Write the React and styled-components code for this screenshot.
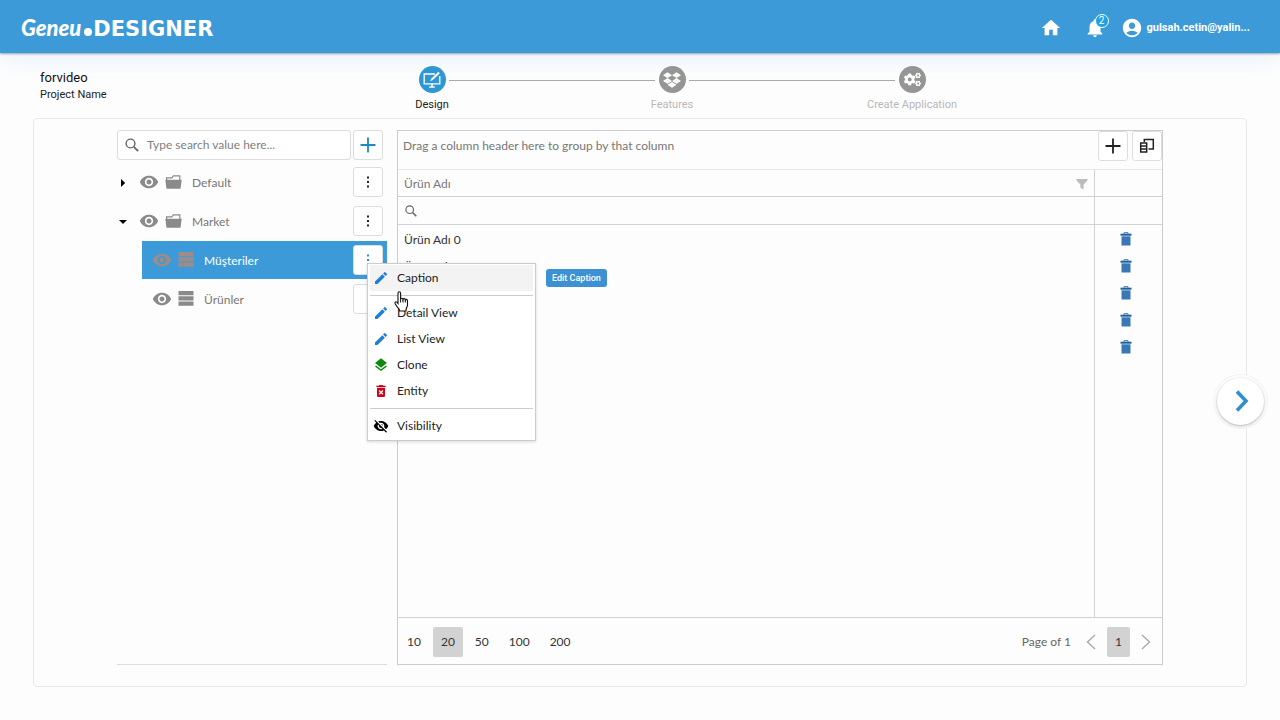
import React from "react";
import styled, { createGlobalStyle, css } from "styled-components";
import {
  MdHome,
  MdNotifications,
  MdAccountCircle,
  MdVisibility,
  MdVisibilityOff,
  MdEdit,
  MdLayers,
  MdDeleteForever,
} from "react-icons/md";
import { FaDropbox, FaCogs } from "react-icons/fa";

const Global = createGlobalStyle`
  *, *::before, *::after { box-sizing: border-box; }
  body {
    margin: 0;
    background: #fdfdfd;
    color: #333;
    font: 12px/16px Lato, "Open Sans", sans-serif;
  }
  button, input { font: inherit; color: inherit; }
  button { cursor: pointer; padding: 0; border: 0; background: none; }
  a { color: inherit; text-decoration: none; }
  svg { display: block; flex: none; }
`;

const Page = styled.div`
  min-height: 100vh;
  display: flex;
  flex-direction: column;
`;

/* ---------- top bar ---------- */

const TopBar = styled.header`
  display: flex;
  align-items: center;
  justify-content: space-between;
  height: 53px;
  padding: 3px 30px 0 21px;
  background: #3d9ad8;
  color: #fff;
  box-shadow: 0 1px 2px rgba(0, 0, 0, 0.35), 0 4px 24px rgba(190, 220, 250, 0.4);
`;

const Brand = styled.a`
  display: flex;
  align-items: baseline;
  line-height: 26px;
`;

const BrandScript = styled.span`
  font: italic 900 22px/26px Lato, sans-serif;
`;

const BrandDot = styled.span`
  width: 8px;
  height: 8px;
  margin: 0 1px 0 3px;
  border-radius: 50%;
  background: #fff;
`;

const BrandTech = styled.span`
  font: 700 21px/26px "DejaVu Sans", sans-serif;
`;

const TopActions = styled.nav`
  display: flex;
  align-items: center;
`;

const IconLink = styled.a`
  position: relative;
  display: block;
  margin-right: ${(p) => (p.$tight ? 15 : 22)}px;
`;

const Badge = styled.span`
  position: absolute;
  top: -3px;
  right: -3px;
  width: 14px;
  height: 14px;
  border: 1px solid #fff;
  border-radius: 50%;
  background: #1ba1e6;
  font: 10px/12px Roboto, sans-serif;
  text-align: center;
`;

const Account = styled.button`
  display: flex;
  align-items: center;
  gap: 4px;
  font: 700 11px/16px Roboto, sans-serif;
  color: #fff;
`;

/* ---------- project and steps ---------- */

const SubHeader = styled.section`
  display: grid;
  grid-template-columns: 272fr 720fr 215fr;
  height: 65px;
  padding: 13px 33px 0 40px;
  font-family: Roboto, sans-serif;
`;

const ProjectName = styled.h1`
  margin: 4px 0 0;
  font-size: 13px;
  line-height: 16px;
  font-weight: 400;
  color: #111;
`;

const ProjectLabel = styled.p`
  margin: 1px 0 0;
  font-size: 11px;
  line-height: 16px;
  color: #222;
`;

const Steps = styled.ol`
  display: grid;
  grid-template-columns: repeat(3, 1fr);
  margin: 0;
  padding: 0;
  list-style: none;
`;

const Step = styled.li`
  position: relative;
  display: flex;
  flex-direction: column;
  align-items: center;
  gap: 4px;
  font-size: 11px;
  line-height: 16px;
  color: ${(p) => (p.$active ? "#222" : "#b8b8b8")};

  &:not(:first-child)::before {
    content: "";
    position: absolute;
    top: 14px;
    right: calc(50% + 17px);
    width: calc(100% - 34px);
    height: 1px;
    background: #a9a9a9;
  }
`;

const StepDot = styled.span`
  display: grid;
  place-items: center;
  width: 27px;
  height: 27px;
  border-radius: 50%;
  background: ${(p) => (p.$active ? "#2e97d4" : "#959595")};
  color: #fff;
`;

/* ---------- workspace ---------- */

const Card = styled.main`
  position: relative;
  flex: 1;
  display: flex;
  gap: 10px;
  margin: 0 33px 33px;
  padding: 11px 83px 21px;
  border: 1px solid #e9e9e9;
  border-radius: 4px;
`;

const NextButton = styled.button`
  position: absolute;
  top: calc(50% - 25px);
  right: -18px;
  display: grid;
  place-items: center;
  width: 47px;
  height: 47px;
  border-radius: 50%;
  background: #fff;
  color: #2f8fd0;
  box-shadow: 0 1px 3px rgba(0, 0, 0, 0.3), 0 0 0 3px #fdfdfd, 0 0 0 4px #f3f3f3;
`;

const SquareButton = styled.button`
  display: grid;
  place-items: center;
  flex: none;
  width: 30px;
  height: 30px;
  border: 1px solid #ddd;
  border-radius: 3px;
  background: #fff;
  color: ${(p) => (p.$blue ? "#1f86cc" : "#222")};
`;

const Sidebar = styled.aside`
  flex: none;
  width: 270px;
  border-bottom: 1px solid #ddd;
`;

const SearchRow = styled.div`
  display: flex;
  gap: 2px;
  padding: 0 4px 3px 0;
`;

const SearchBox = styled.label`
  flex: 1;
  display: flex;
  align-items: center;
  gap: 8px;
  height: 30px;
  padding: 0 7px;
  border: 1px solid #ddd;
  border-radius: 3px;
  background: #fff;
  color: #777;

  input {
    flex: 1;
    min-width: 0;
    padding: 0;
    border: 0;
    outline: 0;
    background: none;
  }
  input::placeholder { color: #808080; opacity: 1; }
`;

const Tree = styled.ul`
  display: flex;
  flex-direction: column;
  gap: 1px;
  margin: 0;
  padding: 0;
  list-style: none;
`;

const TreeRow = styled.li`
  display: flex;
  align-items: center;
  height: 38px;
  margin-left: ${(p) => (p.$nested ? 25 : 0)}px;
  padding: 0 4px 0 ${(p) => (p.$nested ? 10 : 1)}px;
  color: #8a8a8a;
  ${(p) =>
    p.$selected &&
    css`
      background: #3d9ad8;
      color: #a08c86;
    `}
`;

const Toggle = styled.button`
  display: grid;
  place-items: center;
  width: 10px;
  height: 20px;
  margin-right: 11px;
  color: #000;
`;

const TreeIcons = styled.span`
  display: flex;
  align-items: center;
  gap: 6px;
`;

const TreeName = styled.span`
  flex: 1;
  margin-left: 10px;
  padding-top: 2px;
  color: ${(p) => (p.$selected ? "#fff" : "#777")};
`;

const MenuAnchor = styled.div`
  position: relative;
  flex: none;
`;

/* ---------- context menu ---------- */

const Menu = styled.div`
  position: absolute;
  z-index: 5;
  top: 18px;
  left: 14px;
  width: 169px;
  padding: 1px 2px;
  border: 1px solid #ccc;
  background: #fff;
  box-shadow: 0 1px 3px rgba(0, 0, 0, 0.15);
`;

const MenuItem = styled.button`
  display: flex;
  align-items: center;
  gap: 8px;
  width: 100%;
  height: 26px;
  padding-left: 3px;
  text-align: left;
  color: #222;
  background: ${(p) => (p.$active ? "#f3f3f3" : "transparent")};
`;

const MenuRule = styled.hr`
  height: 1px;
  margin: 4px 0;
  border: 0;
  background: #ccc;
`;

const Tooltip = styled.span`
  position: absolute;
  top: 5px;
  left: 178px;
  padding: 0 6px;
  border-radius: 3px;
  background: #3d90d2;
  color: #fff;
  font: 500 9px/18px Roboto, sans-serif;
  white-space: nowrap;
`;

const Pointer = styled.svg`
  position: absolute;
  top: 27px;
  left: 25px;
`;

/* ---------- data grid ---------- */

const GridPanel = styled.section`
  flex: 1;
  min-width: 0;
  display: flex;
  flex-direction: column;
  border: 1px solid #ccc;
  color: #333;
`;

const Toolbar = styled.div`
  display: flex;
  gap: 4px;
  height: 38px;
`;

const GroupHint = styled.span`
  flex: 1;
  padding: 7px 5px 0;
  color: #777;
`;

const TableWrap = styled.div`
  flex: 1;
  display: grid;
`;

const Table = styled.table`
  width: 100%;
  height: 100%;
  border-collapse: separate;
  border-spacing: 0;
  table-layout: fixed;
  border-top: 1px solid #e8e8e8;
`;

const CommandCol = styled.col`
  width: 68px;
`;

const HeadCell = styled.th`
  height: ${(p) => (p.$filter ? 28 : 27)}px;
  padding: 0 6px;
  border-bottom: 1px solid #d2d2d2;
  border-left: ${(p) => (p.$command ? "1px solid #d2d2d2" : "0")};
  font-weight: 400;
  text-align: left;
  color: #777;
`;

const HeadContent = styled.div`
  display: flex;
  align-items: center;
  justify-content: space-between;
  padding-top: 2px;
`;

const FilterField = styled.label`
  display: flex;
  align-items: center;
  gap: 6px;
  padding-left: 1px;

  input {
    flex: 1;
    min-width: 0;
    height: 20px;
    padding: 0;
    border: 0;
    outline: 0;
    background: none;
  }
`;

const Cell = styled.td`
  height: ${(p) => (p.$fill ? "auto" : "27px")};
  padding: ${(p) => (p.$command ? "0 12px 0 6px" : "2px 6px 0")};
  border-left: ${(p) => (p.$command ? "1px solid #d2d2d2" : "0")};
`;

const RemoveButton = styled.button`
  display: grid;
  place-items: center;
  width: 20px;
  height: 20px;
  margin: 0 auto;
`;

const Pager = styled.footer`
  display: flex;
  align-items: center;
  justify-content: space-between;
  height: 47px;
  padding: 2px 4px 0 1px;
  border-top: 1px solid #d2d2d2;
  color: #333;
`;

const PagerGroup = styled.div`
  display: flex;
  align-items: center;
  gap: 4px;
`;

const PageButton = styled.button`
  height: 30px;
  padding: 0 8px;
  border-radius: 2px;
  background: ${(p) => (p.$current ? "#d2d2d2" : "transparent")};
`;

const PageInfo = styled.span`
  margin-right: 4px;
  color: #666;
`;

const ArrowButton = styled.button`
  display: grid;
  place-items: center;
  width: 24px;
  height: 30px;
  color: #aaa;
`;

/* ---------- drawings ---------- */

const SearchIcon = ({ size = 14 }) => (
  <svg width={size} height={size} viewBox="0 0 14 14" fill="none" stroke="#666" strokeWidth="1.4">
    <circle cx="5.5" cy="5.5" r="4.4" />
    <path d="M8.800 8.800L13.200 13.200" strokeWidth="1.8" />
  </svg>
);

const PlusIcon = () => (
  <svg width="16" height="16" viewBox="0 0 16 16" fill="none" stroke="currentColor" strokeWidth="1.8">
    <path d="M8 .5v15M.5 8h15" />
  </svg>
);

const DotsIcon = ({ color = "#222" }) => (
  <svg width="4" height="14" viewBox="0 0 4 14" fill={color}>
    <path d="M1 1.500h2v2H1zM1 6h2v2H1zM1 10.500h2v2H1z" />
  </svg>
);

const FolderIcon = () => (
  <svg width="17" height="14" viewBox="0 0 17 14">
    <path d="M1.600 5V2.800h5.200l1.600-1.900h6.400V5" fill="none" stroke="currentColor" strokeWidth="1.2" />
    <path d="M.3 4.800h16.400l-1.200 8.900h-14z" fill="currentColor" />
  </svg>
);

const EntityIcon = () => (
  <svg width="16" height="16" viewBox="0 0 16 16" fill="currentColor">
    <path d="M.5 0h15v4.200H.5zM.5 5.300h15v4.200H.5zM.5 10.600h15v4.200H.5z" />
  </svg>
);

const Caret = ({ open }) => (
  <svg width="10" height="10" viewBox="0 0 10 10" fill="currentColor">
    <path d={open ? "M1 4h8L5 8z" : "M3 2v8l4.2-4z"} />
  </svg>
);

const DesignIcon = () => (
  <svg width="18" height="18" viewBox="0 0 18 18" fill="none" stroke="currentColor">
    <path d="M12 3H1.200v9.800h15.600V5" strokeWidth="1.3" />
    <path d="M7.200 10l1-2.200L15.400.8l1.400 1.400-7.300 7z" fill="currentColor" stroke="none" />
    <path d="M9 13v3M6.300 16h5.400" strokeWidth="1.6" />
  </svg>
);

const ColumnChooserIcon = () => (
  <svg width="16" height="16" viewBox="0 0 16 16" fill="none" stroke="#222" strokeWidth="1.5">
    <path d="M5.300 4V1.600h9V11H9.500" />
    <path d="M1.700 5h6v9h-6zM1.700 8h6M1.700 11h6" />
  </svg>
);

const FunnelIcon = () => (
  <svg width="12" height="12" viewBox="0 0 12 12" fill="#bcbcbc">
    <path d="M.5 1h11v1.600L7.600 6.400v5L4.400 9.800V6.400L.5 2.600z" />
  </svg>
);

const TrashIcon = () => (
  <svg width="12" height="14" viewBox="0 0 12 14">
    <path d="M4 1.800V.7h4v1.100" fill="none" stroke="#3a78b5" />
    <path d="M.5 1.700h11v2H.5z" fill="#1f609d" />
    <path d="M1.500 4.300h9V13.500h-9z" fill="#3a78b5" />
  </svg>
);

const Chevron = ({ left }) => (
  <svg width="10" height="16" viewBox="0 0 10 16" fill="none" stroke="currentColor" strokeWidth="1.4">
    <path d={left ? "M9 1L1.500 8 9 15" : "M1 1l7.500 7L1 15"} />
  </svg>
);

const HandPointer = () => (
  <Pointer width="16" height="21" viewBox="0 0 16 21" aria-hidden="true">
    <path
      d="M5 2.200c0-2 2.600-2 2.600 0V8c.3-1.100 2.200-1.100 2.400.2.4-.9 2.100-.8 2.300.5.6-.7 2.200-.5 2.200 1v4.600c0 1.600-1.400 2.500-1.400 4V20H6.300v-1.600c-1.300-1.400-3-3.600-4-5.400-1-1.700.3-2.900 1.500-1.800L5 12.500z"
      fill="#fff"
      stroke="#111"
      strokeWidth="1.1"
    />
    <path d="M7.600 8v3.500M10 8.500v3M12.300 9v2.500" stroke="#111" />
  </Pointer>
);

/* ---------- content ---------- */

const steps = [
  { label: "Design", icon: <DesignIcon />, active: true },
  { label: "Features", icon: <FaDropbox size={18} /> },
  { label: "Create Application", icon: <FaCogs size={17} /> },
];

const nodes = [
  { name: "Default", kind: "folder", open: false },
  { name: "Market", kind: "folder", open: true },
  { name: "Müşteriler", kind: "entity", selected: true },
  { name: "Ürünler", kind: "entity" },
];

const rows = ["Ürün Adı 0", "Ürün Adı 1", "Ürün Adı 2", "Ürün Adı 3", "Ürün Adı 4"];

const ContextMenu = () => (
  <Menu role="menu">
    <MenuItem role="menuitem" $active>
      <MdEdit size={16} color="#1f7fd8" />
      Caption
    </MenuItem>
    <MenuRule />
    <MenuItem role="menuitem">
      <MdEdit size={16} color="#1f7fd8" />
      Detail View
    </MenuItem>
    <MenuItem role="menuitem">
      <MdEdit size={16} color="#1f7fd8" />
      List View
    </MenuItem>
    <MenuItem role="menuitem">
      <MdLayers size={16} color="#0d8a0d" />
      Clone
    </MenuItem>
    <MenuItem role="menuitem">
      <MdDeleteForever size={16} color="#d0021b" />
      Entity
    </MenuItem>
    <MenuRule />
    <MenuItem role="menuitem">
      <MdVisibilityOff size={16} color="#000" />
      Visibility
    </MenuItem>
    <Tooltip role="tooltip">Edit Caption</Tooltip>
    <HandPointer />
  </Menu>
);

const TreeNode = ({ node }) => {
  const nested = node.kind === "entity";
  return (
    <TreeRow $nested={nested} $selected={node.selected}>
      {!nested && (
        <Toggle aria-label={`Toggle ${node.name}`}>
          <Caret open={node.open} />
        </Toggle>
      )}
      <TreeIcons>
        <MdVisibility size={20} />
        {nested ? <EntityIcon /> : <FolderIcon />}
      </TreeIcons>
      <TreeName $selected={node.selected}>{node.name}</TreeName>
      <MenuAnchor>
        <SquareButton aria-label={`${node.name} actions`}>
          <DotsIcon color={node.selected ? "#2b8fd3" : "#222"} />
        </SquareButton>
        {node.selected && <ContextMenu />}
      </MenuAnchor>
    </TreeRow>
  );
};

export default function App() {
  return (
    <Page>
      <Global />
      <TopBar>
        <Brand href="#">
          <BrandScript>Geneu</BrandScript>
          <BrandDot />
          <BrandTech>DESIGNER</BrandTech>
        </Brand>
        <TopActions>
          <IconLink href="#" aria-label="Home">
            <MdHome size={22} />
          </IconLink>
          <IconLink $tight href="#" aria-label="Notifications">
            <MdNotifications size={22} />
            <Badge>2</Badge>
          </IconLink>
          <Account>
            <MdAccountCircle size={22} />
            gulsah.cetin@yalin...
          </Account>
        </TopActions>
      </TopBar>

      <SubHeader>
        <div>
          <ProjectName>forvideo</ProjectName>
          <ProjectLabel>Project Name</ProjectLabel>
        </div>
        <Steps>
          {steps.map((s) => (
            <Step key={s.label} $active={s.active}>
              <StepDot $active={s.active}>{s.icon}</StepDot>
              {s.label}
            </Step>
          ))}
        </Steps>
      </SubHeader>

      <Card>
        <Sidebar>
          <SearchRow>
            <SearchBox>
              <SearchIcon />
              <input type="text" aria-label="Search" placeholder="Type search value here..." />
            </SearchBox>
            <SquareButton $blue aria-label="Add">
              <PlusIcon />
            </SquareButton>
          </SearchRow>
          <Tree>
            {nodes.map((n) => (
              <TreeNode key={n.name} node={n} />
            ))}
          </Tree>
        </Sidebar>

        <GridPanel>
          <Toolbar>
            <GroupHint>Drag a column header here to group by that column</GroupHint>
            <SquareButton aria-label="Add row">
              <PlusIcon />
            </SquareButton>
            <SquareButton aria-label="Column chooser">
              <ColumnChooserIcon />
            </SquareButton>
          </Toolbar>
          <TableWrap>
            <Table>
              <colgroup>
                <col />
                <CommandCol />
              </colgroup>
              <thead>
                <tr>
                  <HeadCell scope="col">
                    <HeadContent>
                      Ürün Adı
                      <FunnelIcon />
                    </HeadContent>
                  </HeadCell>
                  <HeadCell $command />
                </tr>
                <tr>
                  <HeadCell $filter>
                    <FilterField>
                      <SearchIcon size={12} />
                      <input type="text" aria-label="Filter Ürün Adı" />
                    </FilterField>
                  </HeadCell>
                  <HeadCell $filter $command />
                </tr>
              </thead>
              <tbody>
                {rows.map((r) => (
                  <tr key={r}>
                    <Cell>{r}</Cell>
                    <Cell $command>
                      <RemoveButton aria-label={`Delete ${r}`}>
                        <TrashIcon />
                      </RemoveButton>
                    </Cell>
                  </tr>
                ))}
                <tr>
                  <Cell $fill />
                  <Cell $fill $command />
                </tr>
              </tbody>
            </Table>
          </TableWrap>
          <Pager>
            <PagerGroup>
              {[10, 20, 50, 100, 200].map((n) => (
                <PageButton key={n} $current={n === 20}>
                  {n}
                </PageButton>
              ))}
            </PagerGroup>
            <PagerGroup>
              <PageInfo>Page of 1</PageInfo>
              <ArrowButton aria-label="Previous page">
                <Chevron left />
              </ArrowButton>
              <PageButton $current>1</PageButton>
              <ArrowButton aria-label="Next page">
                <Chevron />
              </ArrowButton>
            </PagerGroup>
          </Pager>
        </GridPanel>

        <NextButton aria-label="Next step">
          <svg width="16" height="24" viewBox="0 0 16 24" fill="none" stroke="currentColor" strokeWidth="3.6">
            <path d="M4 2.500l9 9.500-9 9.500" />
          </svg>
        </NextButton>
      </Card>
    </Page>
  );
}
